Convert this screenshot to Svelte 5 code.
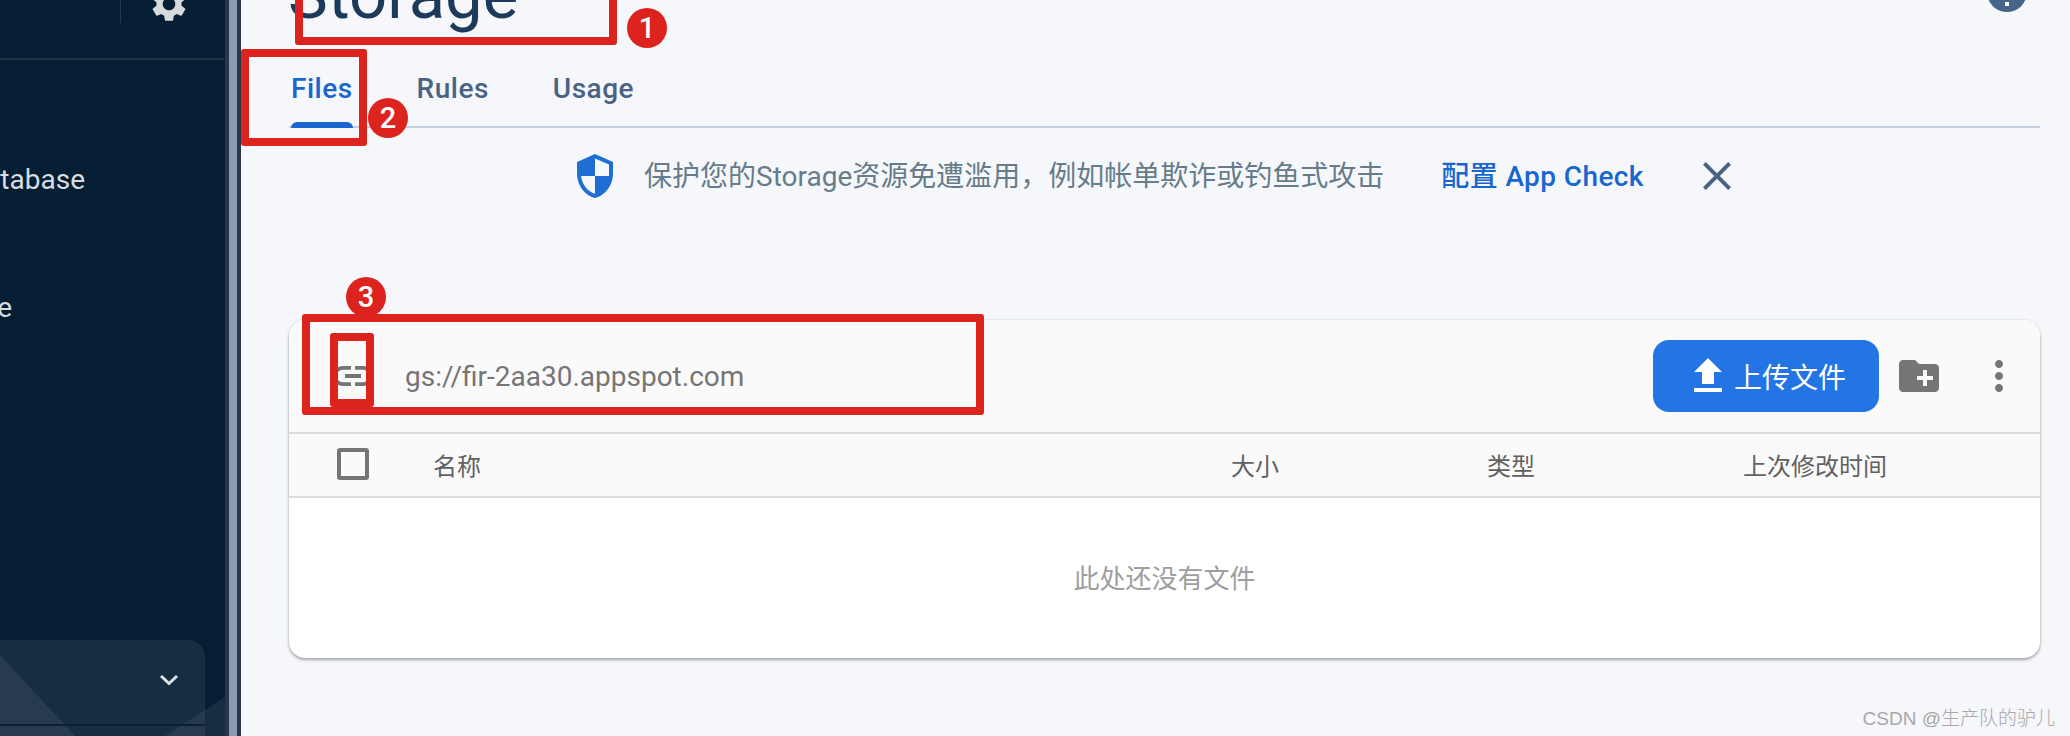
<script>
  const columns = ['名称', '大小', '类型', '上次修改时间'];
  const tabs = ['Files', 'Rules', 'Usage'];
</script>

<div class="shell">
  <aside class="sidebar">
    <svg class="facets" viewBox="0 0 225 736" width="225" height="736" aria-hidden="true">
      <polygon points="0,655 75,736 0,736" />
      <polygon points="165,736 225,697 225,736" />
    </svg>
    <div class="side-top">
      <span class="side-rule"></span>
      <svg class="gear" viewBox="0 0 24 24" width="42" height="42" aria-hidden="true">
        <path d="M19.14 12.94c.04-.3.06-.61.06-.94 0-.32-.02-.64-.07-.94l2.03-1.58c.18-.14.23-.41.12-.61l-1.92-3.32c-.12-.22-.37-.29-.59-.22l-2.39.96c-.5-.38-1.03-.7-1.62-.94l-.36-2.54c-.04-.24-.24-.41-.48-.41h-3.84c-.24 0-.43.17-.47.41l-.36 2.54c-.59.24-1.13.57-1.62.94l-2.39-.96c-.22-.08-.47 0-.59.22L2.74 8.87c-.12.21-.08.47.12.61l2.03 1.58c-.05.3-.09.63-.09.94s.02.64.07.94l-2.03 1.58c-.18.14-.23.41-.12.61l1.92 3.32c.12.22.37.29.59.22l2.39-.96c.5.38 1.03.7 1.62.94l.36 2.54c.05.24.24.41.48.41h3.84c.24 0 .44-.17.47-.41l.36-2.54c.59-.24 1.13-.56 1.62-.94l2.39.96c.22.08.47 0 .59-.22l1.92-3.32c.12-.22.07-.47-.12-.61l-2.01-1.58zM12 15.6c-1.98 0-3.6-1.62-3.6-3.6s1.62-3.6 3.6-3.6 3.6 1.62 3.6 3.6-1.62 3.6-3.6 3.6z" />
      </svg>
    </div>
    <nav class="side-nav">
      <div class="side-item">Realtime Database</div>
      <div class="side-item">Storage</div>
    </nav>
    <div class="plan">
      <svg class="chevron" viewBox="0 0 24 24" width="24" height="24" aria-hidden="true">
        <path d="M4 8l8 7.5L20 8" />
      </svg>
      <span class="plan-rule"></span>
    </div>
  </aside>

  <div class="splitter"><span></span></div>

  <main class="content">
    <h1>Storage</h1>
    <svg class="help" viewBox="0 0 40 40" width="40" height="40" aria-hidden="true">
      <circle cx="20" cy="20" r="20" />
      <rect x="18" y="30" width="4" height="4" />
    </svg>

    <div class="tabs">
      {#each tabs as tab, i}
        <div class="tab" class:active={i === 0}>{tab}</div>
      {/each}
    </div>

    <div class="banner">
      <svg class="shield" viewBox="0 0 24 24" width="48" height="48" aria-hidden="true">
        <path transform="matrix(-1 0 0 1 24 0)" d="M12 1L3 5v6c0 5.55 3.84 10.74 9 12 5.16-1.26 9-6.45 9-12V5l-9-4zm0 10.99h7c-.53 4.12-3.28 7.79-7 8.94V12H5V6.3l7-3.11v8.8z" />
      </svg>
      <span class="banner-text">保护您的Storage资源免遭滥用，例如帐单欺诈或钓鱼式攻击</span>
      <span class="banner-link">配置 App Check</span>
      <svg class="close" viewBox="0 0 24 24" width="48" height="48" aria-hidden="true">
        <path d="M19 6.41L17.59 5 12 10.59 6.41 5 5 6.41 10.59 12 5 17.59 6.41 19 12 13.41 17.59 19 19 17.59 13.41 12z" />
      </svg>
    </div>

    <section class="card">
      <div class="toolbar">
        <svg class="tool-icon" viewBox="0 0 24 24" width="48" height="48" aria-hidden="true">
          <path d="M3.9 12c0-1.71 1.39-3.1 3.1-3.1h4V7H7c-2.76 0-5 2.24-5 5s2.24 5 5 5h4v-1.9H7c-1.71 0-3.1-1.39-3.1-3.1zM8 13h8v-2H8v2zm9-6h-4v1.9h4c1.71 0 3.1 1.39 3.1 3.1s-1.39 3.1-3.1 3.1h-4V17h4c2.76 0 5-2.24 5-5s-2.24-5-5-5z" />
        </svg>
        <span class="bucket">gs://fir-2aa30.appspot.com</span>
        <button class="upload">
          <svg viewBox="0 0 24 24" width="48" height="48" aria-hidden="true">
            <path d="M9 16h6v-6h4l-7-7-7 7h4zm-4 2h14v2H5z" />
          </svg>
          上传文件
        </button>
        <svg class="tool-icon folder" viewBox="0 0 24 24" width="48" height="48" aria-hidden="true">
          <path d="M20 6h-8l-2-2H4c-1.11 0-1.99.89-1.99 2L2 18c0 1.11.89 2 2 2h16c1.11 0 2-.89 2-2V8c0-1.11-.89-2-2-2zm-1 8h-3v3h-2v-3h-3v-2h3V9h2v3h3v2z" />
        </svg>
        <svg class="tool-icon more" viewBox="0 0 24 24" width="48" height="48" aria-hidden="true">
          <path d="M12 8c1.1 0 2-.9 2-2s-.9-2-2-2-2 .9-2 2 .9 2 2 2zm0 2c-1.1 0-2 .9-2 2s.9 2 2 2 2-.9 2-2-.9-2-2-2zm0 6c-1.1 0-2 .9-2 2s.9 2 2 2 2-.9 2-2-.9-2-2-2z" />
        </svg>
      </div>

      <div class="table-head">
        <span class="checkbox"></span>
        {#each columns as col}
          <span>{col}</span>
        {/each}
      </div>

      <div class="empty">此处还没有文件</div>
    </section>

    <div class="watermark">CSDN @生产队的驴儿</div>
  </main>

  <!-- red annotations drawn on top of the screenshot -->
  <div class="mark mark-title"></div>
  <div class="mark mark-tab"></div>
  <div class="mark mark-bucket"></div>
  <div class="mark mark-icon"></div>
  <div class="pin pin-1">1</div>
  <div class="pin pin-2">2</div>
  <div class="pin pin-3">3</div>
</div>

<style>
  :global(body) {
    margin: 0;
  }

  * {
    box-sizing: border-box;
  }

  .shell {
    position: relative;
    display: flex;
    width: 2070px;
    height: 736px;
    overflow: hidden;
    font-family: Roboto, "Noto Sans CJK SC", sans-serif;
    background: #f5f7fa;
  }

  .sidebar {
    position: relative;
    display: flex;
    flex-direction: column;
    flex: 0 0 225px;
    height: 736px;
    overflow: hidden;
    background: #051e34;
  }

  .facets {
    position: absolute;
    left: 0;
    top: 0;
  }

  .facets polygon {
    fill: rgba(255, 255, 255, 0.07);
  }

  .side-top {
    position: relative;
    flex: 0 0 60px;
    border-bottom: 2px solid #1c3346;
  }

  .side-rule {
    position: absolute;
    left: 120px;
    top: 0;
    width: 1px;
    height: 23px;
    background: #1f3a52;
  }

  .gear {
    position: absolute;
    left: 148px;
    top: -17px;
    fill: #d5dadf;
  }

  .side-nav {
    display: flex;
    flex-direction: column;
    gap: 96px;
    margin-top: 104px;
  }

  .side-item {
    display: flex;
    justify-content: flex-end;
    white-space: nowrap;
    font-size: 28px;
    line-height: 32px;
    color: #d7dce0;
  }

  .side-item:first-child {
    padding-right: 140px;
  }

  .side-item:last-child {
    padding-right: 213px;
  }

  .plan {
    position: relative;
    flex: 0 0 96px;
    width: 205px;
    margin-top: auto;
    border-radius: 0 16px 0 0;
    background: rgba(255, 255, 255, 0.07);
  }

  .chevron {
    position: absolute;
    left: 157px;
    top: 28px;
    fill: none;
    stroke: #dfe3e7;
    stroke-width: 3;
  }

  .plan-rule {
    position: absolute;
    left: 0;
    right: 0;
    top: 84px;
    height: 2px;
    background: #0b2036;
  }

  .splitter {
    flex: 0 0 16px;
    padding: 0 4px;
    background: #2b3645;
  }

  .splitter span {
    display: block;
    height: 100%;
    background: #8a9bb3;
  }

  .content {
    position: relative;
    flex: 1;
    min-width: 0;
    padding: 0 30px 0 48px;
  }

  h1 {
    margin: -37px 0 0 -1px;
    font-size: 67px;
    line-height: 64px;
    font-weight: 400;
    color: #1c3a5a;
  }

  .help {
    position: absolute;
    left: 1746px;
    top: -28px;
    fill: #46658a;
  }

  .help rect {
    fill: #fff;
  }

  .tabs {
    display: flex;
    gap: 64px;
    height: 64px;
    margin-top: 37px;
    padding-left: 2px;
    border-bottom: 2px solid #c5d1e0;
  }

  .tab {
    position: relative;
    height: 64px;
    padding-top: 7px;
    font-size: 28px;
    line-height: 36px;
    font-weight: 500;
    letter-spacing: 0.5px;
    color: #4a6385;
  }

  .tab.active {
    color: #1a66d0;
  }

  .tab.active::after {
    content: "";
    position: absolute;
    left: 0;
    right: 0;
    bottom: 0;
    height: 6px;
    border-radius: 6px 6px 0 0;
    background: #1a66d0;
  }

  .banner {
    display: flex;
    align-items: center;
    height: 48px;
    margin: 22px 0 0 282px;
  }

  .shield {
    margin-top: 4px;
    fill: #1f6ed4;
  }

  .banner-text {
    margin-left: 25px;
    font-size: 28px;
    color: #667c8a;
    white-space: nowrap;
  }

  .banner-link {
    margin-left: 57px;
    font-size: 28px;
    font-weight: 500;
    letter-spacing: 0.4px;
    color: #1a66d0;
    white-space: nowrap;
  }

  .close {
    margin: 3px 0 0 49px;
    fill: #4a6385;
  }

  .card {
    margin-top: 122px;
    height: 338px;
    border-radius: 16px;
    overflow: hidden;
    background: #fff;
    box-shadow: 0 2px 3px rgba(60, 64, 67, 0.4), 0 0 2px rgba(60, 64, 67, 0.2);
  }

  .toolbar {
    display: flex;
    align-items: center;
    height: 114px;
    padding: 0 17px 0 40px;
    background: #fafafa;
    border-bottom: 2px solid #dddddd;
  }

  .tool-icon {
    flex: none;
    fill: #757575;
  }

  .bucket {
    flex: 1;
    margin-left: 28px;
    font-size: 28px;
    color: #757575;
  }

  .upload {
    display: flex;
    align-items: center;
    justify-content: center;
    gap: 2px;
    width: 226px;
    height: 72px;
    padding: 0;
    border: none;
    border-radius: 16px;
    font: inherit;
    font-size: 28px;
    color: #fff;
    background: #2375e6;
  }

  .upload svg {
    margin-left: -2px;
    fill: #fff;
  }

  .folder {
    margin-left: 16px;
  }

  .more {
    margin-left: 32px;
  }

  .table-head {
    display: grid;
    grid-template-columns: 144px 798px 256px 256px 1fr;
    align-items: center;
    height: 64px;
    padding-bottom: 2px;
    font-size: 24px;
    color: #616161;
    background: #fafafa;
    border-bottom: 2px solid #dddddd;
  }

  .checkbox {
    width: 32px;
    height: 32px;
    margin-left: 48px;
    border: 4px solid #757575;
    border-radius: 3px;
  }

  .empty {
    display: flex;
    align-items: center;
    justify-content: center;
    height: 160px;
    padding-bottom: 4px;
    font-size: 26px;
    color: #9e9e9e;
  }

  .watermark {
    position: absolute;
    right: 15px;
    bottom: 6px;
    font-family: "Liberation Sans", "Noto Sans CJK SC", sans-serif;
    font-size: 19px;
    font-weight: 300;
    color: #a8a8a8;
    white-space: nowrap;
  }

  .mark {
    position: absolute;
    border: 8px solid #dc231e;
    border-radius: 3px;
  }

  .mark-title {
    left: 295px;
    top: -20px;
    width: 322px;
    height: 65px;
  }

  .mark-tab {
    left: 241px;
    top: 49px;
    width: 126px;
    height: 97px;
  }

  .mark-bucket {
    left: 302px;
    top: 314px;
    width: 682px;
    height: 101px;
  }

  .mark-icon {
    left: 330px;
    top: 333px;
    width: 44px;
    height: 74px;
  }

  .pin {
    position: absolute;
    width: 40px;
    height: 40px;
    border-radius: 50%;
    font-size: 29px;
    font-weight: 500;
    line-height: 40px;
    text-align: center;
    color: #fff;
    background: #dc231e;
  }

  .pin-1 {
    left: 627px;
    top: 8px;
  }

  .pin-2 {
    left: 368px;
    top: 98px;
  }

  .pin-3 {
    left: 346px;
    top: 277px;
  }
</style>
